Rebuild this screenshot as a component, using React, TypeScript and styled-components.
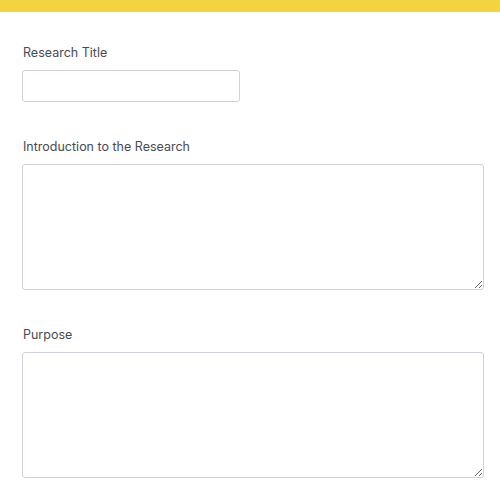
import styled, { createGlobalStyle } from 'styled-components';

const GlobalStyle = createGlobalStyle`
  body {
    margin: 0;
    background: #ffffff;
    font-family: Inter, "Noto Sans", sans-serif;
  }
`;

const TopBar = styled.div`
  height: 12px;
  background: #f3d33f;
`;

const Form = styled.form`
  display: flex;
  flex-direction: column;
  gap: 34px;
  padding: 30px 16px 0 22px;
`;

const Field = styled.div`
  display: flex;
  flex-direction: column;
  gap: 8px;
`;

const Label = styled.label`
  font-size: 12.5px;
  line-height: 18px;
  padding-top: 2px;
  color: #4a4a52;
  padding-left: 1px;
`;

const TextInput = styled.input`
  box-sizing: border-box;
  width: 218px;
  height: 32px;
  border: 1px solid #d0d0de;
  border-radius: 3px;
  background: #fff;
  font: inherit;
  font-size: 13px;
  padding: 0 8px;
  outline: none;
`;

const TextArea = styled.textarea<{ $rows: number }>`
  box-sizing: border-box;
  display: block;
  width: 100%;
  height: ${(p) => p.$rows}px;
  border: 1px solid #d0d0de;
  border-radius: 3px;
  background: #fff;
  font: inherit;
  font-size: 13px;
  padding: 8px;
  outline: none;
  resize: vertical;
`;

export default function App() {
  return (
    <>
      <GlobalStyle />
      <TopBar />
      <Form>
        <Field>
          <Label htmlFor="title">Research Title</Label>
          <TextInput id="title" type="text" />
        </Field>
        <Field>
          <Label htmlFor="intro">Introduction to the Research</Label>
          <TextArea id="intro" $rows={126} />
        </Field>
        <Field>
          <Label htmlFor="purpose">Purpose</Label>
          <TextArea id="purpose" $rows={126} />
        </Field>
      </Form>
    </>
  );
}
